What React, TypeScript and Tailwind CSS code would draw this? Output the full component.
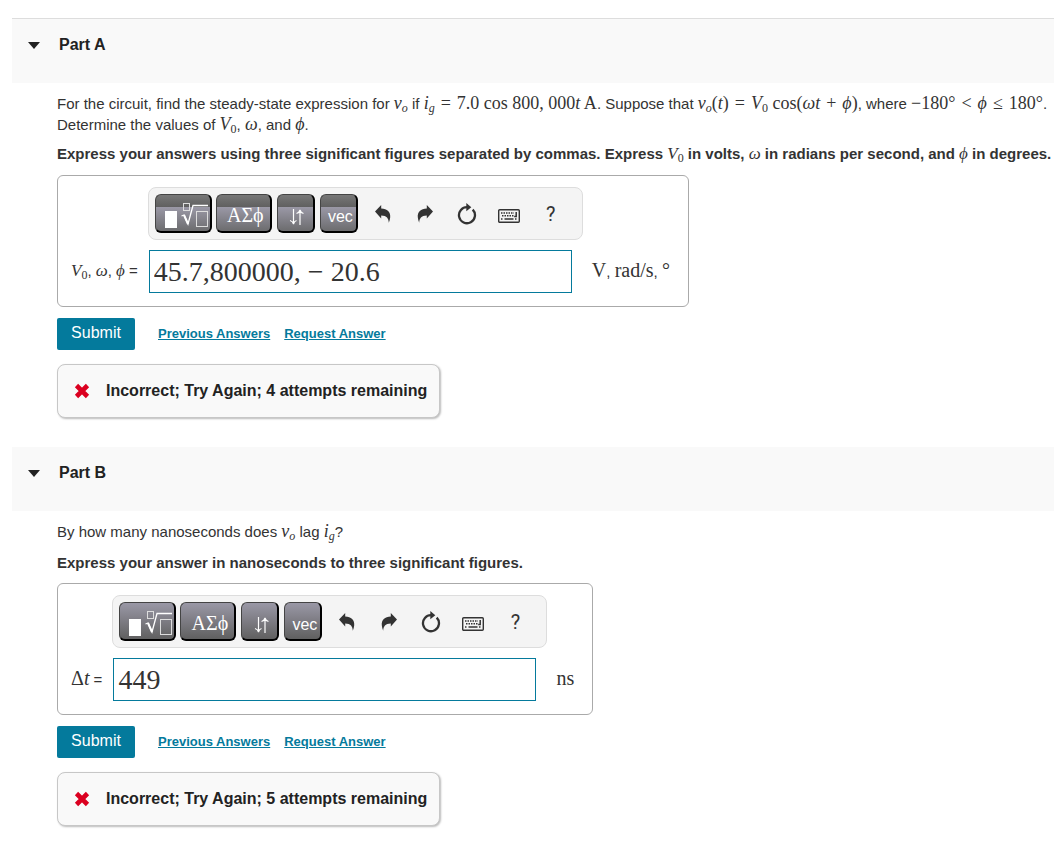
import { useState } from "react"
import type { ReactNode } from "react"

interface PartProps {
  id: string
  title: string
  first?: boolean
  question: ReactNode
  instructions: ReactNode
  label: ReactNode
  labelText: string
  answer: string
  unit: ReactNode
  attempts: number
  keyClass: string
}

const KEY_BANDED = "bg-[linear-gradient(#777777_0%,#606060_33%,#9a98a6_34%,#6c6c6e_100%)]"
const KEY_SMOOTH = "bg-[linear-gradient(#9a98a6,#606060)]"

const SUB = "align-[-3px] text-xs leading-none"

const MATH_SIZE = {
  base: "text-[17px]",
  large: "text-[18px]",
  unit: "text-[20px]",
}

function M({ children, size = "base" }: { children: ReactNode; size?: keyof typeof MATH_SIZE }) {
  return (
    <span className={`whitespace-nowrap font-['Liberation_Serif',serif] leading-none font-normal ${MATH_SIZE[size]}`}>
      {children}
    </span>
  )
}

// relation or binary operator with its surrounding space
function Rel({ children }: { children: ReactNode }) {
  return <span className="mx-[6px]">{children}</span>
}

function V0() {
  return <><i>V</i><span className={SUB}>0</span></>
}

function Vo() {
  return <><i>v</i><i className={SUB}>o</i></>
}

function Ig() {
  return <><i>i</i><i className={SUB}>g</i></>
}

function TemplateIcon() {
  return (
    <svg width="44" height="26" viewBox="0 0 44 26" fill="none" aria-hidden="true">
      <rect x="0" y="9" width="12" height="17" fill="#fff" />
      <rect x="18.500" y="1.500" width="6" height="7" stroke="#ddd" />
      <path d="M16.500 14l2.500-1 4 9L28 3.500H43" stroke="#fff" strokeWidth="1.300" />
      <path d="M19 13l4 9" stroke="#fff" strokeWidth="2" />
      <rect x="31.500" y="9.500" width="11" height="15" stroke="#ddd" />
    </svg>
  )
}

function UpDownIcon() {
  return (
    <svg width="16" height="18" viewBox="0 0 16 18" fill="none" stroke="#fff" strokeWidth="1.200" aria-hidden="true">
      <path d="M4.500 1v15M1 12.500c2 .5 3 1.500 3.500 3.500.5-2 1.500-3 3-3.500M11 17V2M7.500 5.500C9.500 5 10.500 4 11 2c.5 2 1.500 3 3.500 3.500" />
    </svg>
  )
}

function UndoIcon({ flip }: { flip?: boolean }) {
  return (
    <svg width="16" height="18" viewBox="0 0 16 18" className={flip ? "-scale-x-100" : ""} aria-hidden="true">
      <path d="M0 6.500L6.200 0v3.500c6 .2 9.600 3.600 9 8.800-.2 2-.6 3.600-1.400 5.500-.1-4.500-2-7.200-7.600-7.400v3.100z" fill="#333" />
    </svg>
  )
}

function ResetIcon() {
  return (
    <svg width="20" height="22" viewBox="0 0 20 22" fill="none" aria-hidden="true">
      <path d="M10.500 4.200A8 8 0 1 0 15.700 6.600" stroke="#333" strokeWidth="2.300" />
      <path d="M9.300 0l5 4.300-5 4z" fill="#333" />
    </svg>
  )
}

function KeyboardIcon() {
  return (
    <svg width="22" height="14" viewBox="0 0 22 14" fill="none" aria-hidden="true">
      <rect x=".7" y=".7" width="20.600" height="12.600" rx="1" stroke="#333" strokeWidth="1.400" />
      <path d="M3 4h13M4 6.700h12M3 10h2M17 10h2" stroke="#333" strokeWidth="1.600" strokeDasharray="1.500 1" />
      <path d="M6.500 10h9M18.200 3v4.500h-2" stroke="#333" strokeWidth="1.500" />
    </svg>
  )
}

function Toolbar({ keyClass }: { keyClass: string }) {
  const key = `flex h-[39px] items-center justify-center rounded-md border border-black border-t-[#444] border-l-[#444] border-r-2 border-b-2 text-white ${keyClass}`
  const tool = "flex h-[39px] w-[42px] items-center justify-center text-[#333]"

  return (
    <div className="flex h-[53px] items-center rounded-lg border border-[#ddd] bg-[#f4f4f4] px-[6px]">
      <div className="flex gap-1">
        <button type="button" aria-label="Templates" className={`w-[57px] pt-1 pl-2 ${key}`}><TemplateIcon /></button>
        <button type="button" className={`w-14 pt-1 pl-1 font-['Liberation_Serif',serif] text-[20px] ${key}`}>ΑΣϕ</button>
        <button type="button" aria-label="Subscript and superscript" className={`ml-px w-[38px] pt-2 pl-1 ${key}`}><UpDownIcon /></button>
        <button type="button" className={`ml-px w-[38px] pt-2 pl-1 text-base ${key}`}>vec</button>
      </div>
      <div className="ml-1 flex">
        <button type="button" aria-label="Undo" className={tool}><UndoIcon /></button>
        <button type="button" aria-label="Redo" className={tool}><UndoIcon flip /></button>
        <button type="button" aria-label="Reset" className={tool}><ResetIcon /></button>
        <button type="button" aria-label="Keyboard" className={`pt-1 ${tool}`}><KeyboardIcon /></button>
        <button type="button" className={`font-[Roboto,sans-serif] text-xl ${tool}`}>?</button>
      </div>
    </div>
  )
}

function Part({ id, title, first, question, instructions, label, labelText, answer, unit, attempts, keyClass }: PartProps) {
  const [open, setOpen] = useState(true)
  const [value, setValue] = useState(answer)

  return (
    <section>
      <h2 className={`h-16 bg-[#f9f9f9] ${first ? "box-content border-t border-[#ddd]" : ""}`}>
        <button
          type="button"
          onClick={() => setOpen(!open)}
          aria-expanded={open}
          className="flex items-center gap-[19px] pt-[14px] pl-4 text-base font-bold text-[#222]"
        >
          <svg width="12" height="7" viewBox="0 0 12 7" aria-hidden="true">
            <path d="M0 0h12L6 7z" fill="#222" />
          </svg>
          {title}
        </button>
      </h2>

      {open && (
        <div className="pt-[10px] pl-[45px]">
          <p className="leading-[21px]">{question}</p>
          <p className={`leading-[21px] font-bold ${first ? "mt-2" : "mt-[10px]"}`}>{instructions}</p>

          {/* Answer box */}
          <div className={`grid w-fit grid-cols-[auto_435px_auto] items-center gap-y-[10px] rounded-md border border-[#aaa] pt-[11px] pr-[18px] pb-[13px] pl-[13px] ${first ? "mt-[11px]" : "mt-[10px]"}`}>
            <div className="col-start-2 row-start-1"><Toolbar keyClass={keyClass} /></div>
            <label htmlFor={id} className="col-start-1 row-start-2 pr-[10px] whitespace-nowrap">{label}</label>
            <input
              id={id}
              type="text"
              aria-label={labelText}
              value={value}
              onChange={(e) => setValue(e.target.value)}
              className="col-start-2 row-start-2 ml-px h-[43px] w-[423px] border border-[#047a9c] bg-white px-1 font-['Liberation_Serif',serif] text-[28px] text-[#333] outline-none"
            />
            <span className="col-start-3 row-start-2 pl-[9px] whitespace-nowrap">{unit}</span>
          </div>

          {/* Actions */}
          <div className="mt-[11px] flex items-center text-[13px] font-bold text-[#047a9c]">
            <button type="button" className="mr-[23px] h-8 w-[78px] rounded-xs bg-[#047a9c] pb-0.5 text-base font-normal text-white">Submit</button>
            <a href="#previous" className="mr-[14px] underline">Previous Answers</a>
            <a href="#request" className="underline">Request Answer</a>
          </div>

          {/* Feedback */}
          <div className="mt-[14px] flex h-[54px] w-fit items-center rounded-lg border border-[#c7c7c7] bg-[#f9f9f9] pr-3 pl-4 text-base font-bold text-[#222] shadow-[1px_1px_2px_#bbb]">
            <svg width="16" height="16" viewBox="0 0 16 16" className="mr-4" aria-hidden="true">
              <path d="M2.500 2.500l11 11M13.500 2.500l-11 11" stroke="#db0020" strokeWidth="4.600" />
            </svg>
            Incorrect; Try Again; {attempts} attempts remaining
          </div>
        </div>
      )}
    </section>
  )
}

export default function App() {
  return (
    <main className="mt-[18px] mr-2 mb-4 ml-3 space-y-[29px] bg-white font-['Liberation_Sans',Arial,sans-serif] text-[15px] text-[#333]">
      <Part
        id="answer-a"
        title="Part A"
        first
        question={
          <>
            <span>For the circuit, find the steady-state expression for </span>
            <M size="large"><Vo /></M> if{" "}
            <M size="large"><Ig /><Rel>=</Rel>7.0 cos 800, 000<i>t</i> A</M>. Suppose that{" "}
            <M size="large"><Vo />(<i>t</i>)<Rel>=</Rel><V0 /> cos(<i>ωt</i><Rel>+</Rel><i>ϕ</i>)</M>, where{" "}
            <M size="large">−180°<Rel>&lt;</Rel><i>ϕ</i><Rel>≤</Rel>180°</M><span>. </span>
            <span>Determine the values of </span>
            <M size="large"><V0 /></M>, <M size="large"><i>ω</i></M>, and <M size="large"><i>ϕ</i></M>.
          </>
        }
        instructions={
          <>
            Express your answers using three significant figures separated by commas. Express{" "}
            <M><V0 /></M> in volts, <M><i>ω</i></M> in radians per second, and <M><i>ϕ</i></M> in degrees.
          </>
        }
        label={<><M><V0 /></M>, <M><i>ω</i></M>, <M><i>ϕ</i></M> =</>}
        labelText="V0, ω, ϕ"
        answer="45.7,800000, − 20.6"
        unit={<><M size="unit">V</M>, <M size="unit">rad/s</M>, <M size="unit">°</M></>}
        attempts={4}
        keyClass={KEY_BANDED}
      />
      <Part
        id="answer-b"
        title="Part B"
        question={<>By how many nanoseconds does <M size="large"><Vo /></M> lag <M size="large"><Ig /></M>?</>}
        instructions="Express your answer in nanoseconds to three significant figures."
        label={<><M size="unit">Δ<i>t</i></M> =</>}
        labelText="Δt"
        answer="449"
        unit={<M size="unit">ns</M>}
        attempts={5}
        keyClass={KEY_SMOOTH}
      />
    </main>
  )
}
